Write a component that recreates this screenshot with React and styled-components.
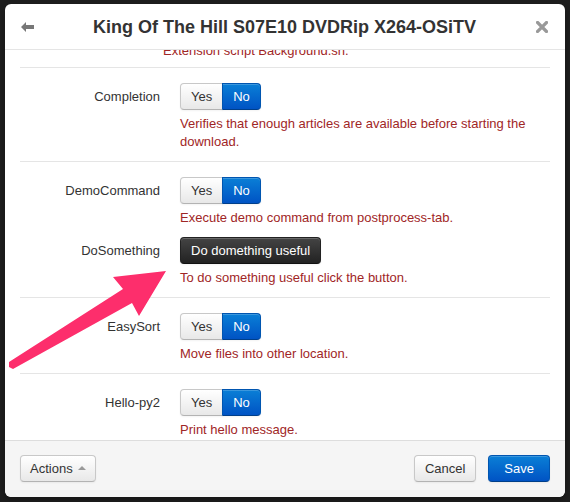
import React from 'react';
import styled, { createGlobalStyle } from 'styled-components';

const GlobalStyle = createGlobalStyle`
	html, body {
		margin: 0;
		padding: 0;
		background: #1e1e1e;
		font-family: "Liberation Sans", Arial, sans-serif;
		font-size: 13px;
		color: #333;
	}
`;

const Page = styled.div`
	width: 570px;
	height: 502px;
	padding: 4px 5px;
	box-sizing: border-box;
	overflow: hidden;
`;

const Modal = styled.div`
	position: relative;
	width: 560px;
	height: 493px;
	background: #fff;
	border-radius: 6px;
	box-shadow: 0 3px 7px rgba(0, 0, 0, 0.3);
	display: flex;
	flex-direction: column;
	overflow: hidden;
`;

const Header = styled.div`
	display: flex;
	align-items: center;
	justify-content: space-between;
	padding: 11px 16px 10px 15px;
	border-bottom: 1px solid #e5e5e5;
`;

const Title = styled.h3`
	margin: 0;
	flex: 1;
	text-align: center;
	font-size: 18px;
	line-height: 24px;
	font-weight: bold;
	color: #333;
`;

const IconButton = styled.span`
	display: flex;
	align-items: center;
	justify-content: center;
	width: 14px;
	height: 24px;
`;

const Body = styled.div`
	flex: 1;
	overflow: hidden;
	padding: 0 15px;
`;

const Scroller = styled.div`
	margin-top: ${props => props.$offset || 0}px;
`;

const Section = styled.div`
	padding: ${props => props.$partial ? '0 0 7px' : '15px 0 10px'};
	border-bottom: 1px solid #e5e5e5;
`;

const Field = styled.div`
	display: flex;
	& + & {
		margin-top: 10px;
	}
`;

const Label = styled.div`
	width: 140px;
	flex-shrink: 0;
	text-align: right;
	padding-top: 5px;
	line-height: 18px;
	color: #333;
`;

const Controls = styled.div`
	margin-left: 20px;
	flex: 1;
	display: flex;
	flex-direction: column;
	align-items: flex-start;
`;

const HelpText = styled.div`
	margin-top: ${props => props.$partial ? 0 : 5}px;
	margin-left: ${props => props.$indent || 0}px;
	line-height: 18px;
	color: #9f2626;
`;

const ButtonGroup = styled.div`
	display: flex;
`;

const Btn = styled.button`
	font-family: inherit;
	font-size: 13px;
	height: 27px;
	padding: 0 ${props => props.$pad || 10}px;
	line-height: 25px;
	border-radius: 4px;
	cursor: pointer;
	display: flex;
	align-items: center;
	gap: 5px;
	border: 1px solid ${props => props.$variant === 'primary' ? '#0055b0' : props.$variant === 'dark' ? '#222' : '#c8c8c8'};
	border-bottom-color: ${props => props.$variant === 'primary' ? '#003f8a' : props.$variant === 'dark' ? '#111' : '#b3b3b3'};
	color: ${props => props.$variant ? '#fff' : '#333'};
	background: ${props =>
		props.$variant === 'primary' ? 'linear-gradient(#0a7fd6, #0053c4)' :
		props.$variant === 'dark' ? 'linear-gradient(#444, #222)' :
		'linear-gradient(#fff, #e8e8e8)'};
	box-shadow: inset 0 1px 0 rgba(255, 255, 255, 0.2), 0 1px 2px rgba(0, 0, 0, 0.05);

	${ButtonGroup} > & {
		border-radius: 0;
	}
	${ButtonGroup} > &:first-child {
		border-radius: 4px 0 0 4px;
	}
	${ButtonGroup} > &:last-child {
		border-radius: 0 4px 4px 0;
		margin-left: -1px;
	}
`;

const Caret = styled.span`
	width: 0;
	height: 0;
	border-left: 4px solid transparent;
	border-right: 4px solid transparent;
	border-bottom: 4px solid #999;
	margin-top: -2px;
`;

const Footer = styled.div`
	display: flex;
	align-items: center;
	padding: 14px 15px 15px 15px;
	background: #f5f5f5;
	border-top: 1px solid #ddd;
	border-radius: 0 0 6px 6px;
`;

const Spacer = styled.div`
	flex: 1;
`;

const FooterRight = styled.div`
	display: flex;
	gap: 12px;
`;

const Pointer = styled.svg`
	position: absolute;
	left: 0;
	top: 0;
	pointer-events: none;
`;

const BackIcon = () => (
	<svg width="13" height="10" viewBox="0 0 13 10">
		<path d="M0 5 L5 0 L5 3 L13 3 L13 7 L5 7 L5 10 Z" fill="#777" />
	</svg>
);

const CloseIcon = () => (
	<svg width="12" height="12" viewBox="0 0 12 12">
		<path d="M1.5 1.5 L10.5 10.5 M10.5 1.5 L1.5 10.5" stroke="#999" strokeWidth="3.2" strokeLinecap="square" />
	</svg>
);

const Toggle = () => (
	<ButtonGroup>
		<Btn>Yes</Btn>
		<Btn $variant="primary">No</Btn>
	</ButtonGroup>
);

const options = [
	{
		fields: [
			{ name: 'Completion', help: ['Verifies that enough articles are available before starting the', 'download.'] },
		],
	},
	{
		fields: [
			{ name: 'DemoCommand', help: ['Execute demo command from postprocess-tab.'] },
			{ name: 'DoSomething', button: 'Do domething useful', help: ['To do something useful click the button.'] },
		],
	},
	{
		fields: [
			{ name: 'EasySort', help: ['Move files into other location.'] },
		],
	},
	{
		fields: [
			{ name: 'Hello-py2', help: ['Print hello message.'] },
		],
	},
];

export default function App() {
	return (
		<>
			<GlobalStyle />
			<Page>
				<Modal>
					<Header>
						<IconButton><BackIcon /></IconButton>
						<Title>King Of The Hill S07E10 DVDRip X264-OSiTV</Title>
						<IconButton><CloseIcon /></IconButton>
					</Header>
					<Body>
						<Scroller $offset={-8}>
							<Section $partial>
								<HelpText $partial $indent={143}>Extension script Background.sh.</HelpText>
							</Section>
							{options.map((section, i) => (
								<Section key={i}>
									{section.fields.map(field => (
										<Field key={field.name}>
											<Label>{field.name}</Label>
											<Controls>
												{field.button
													? <Btn $variant="dark">{field.button}</Btn>
													: <Toggle />}
												{field.help.map((line, j) => <HelpText key={line} $partial={j > 0}>{line}</HelpText>)}
											</Controls>
										</Field>
									))}
								</Section>
							))}
						</Scroller>
					</Body>
					<Footer>
						<Btn $pad={9}>Actions <Caret /></Btn>
						<Spacer />
						<FooterRight>
							<Btn $pad={10}>Cancel</Btn>
							<Btn $variant="primary" $pad={15}>Save</Btn>
						</FooterRight>
					</Footer>
					<Pointer width="560" height="493" viewBox="5 4 560 493">
						<polygon
							points="9,362 123,289 113,277 166,271 139,316 132,303 13,369 9,367"
							fill="#fd2e6c"
						/>
					</Pointer>
				</Modal>
			</Page>
		</>
	);
}
